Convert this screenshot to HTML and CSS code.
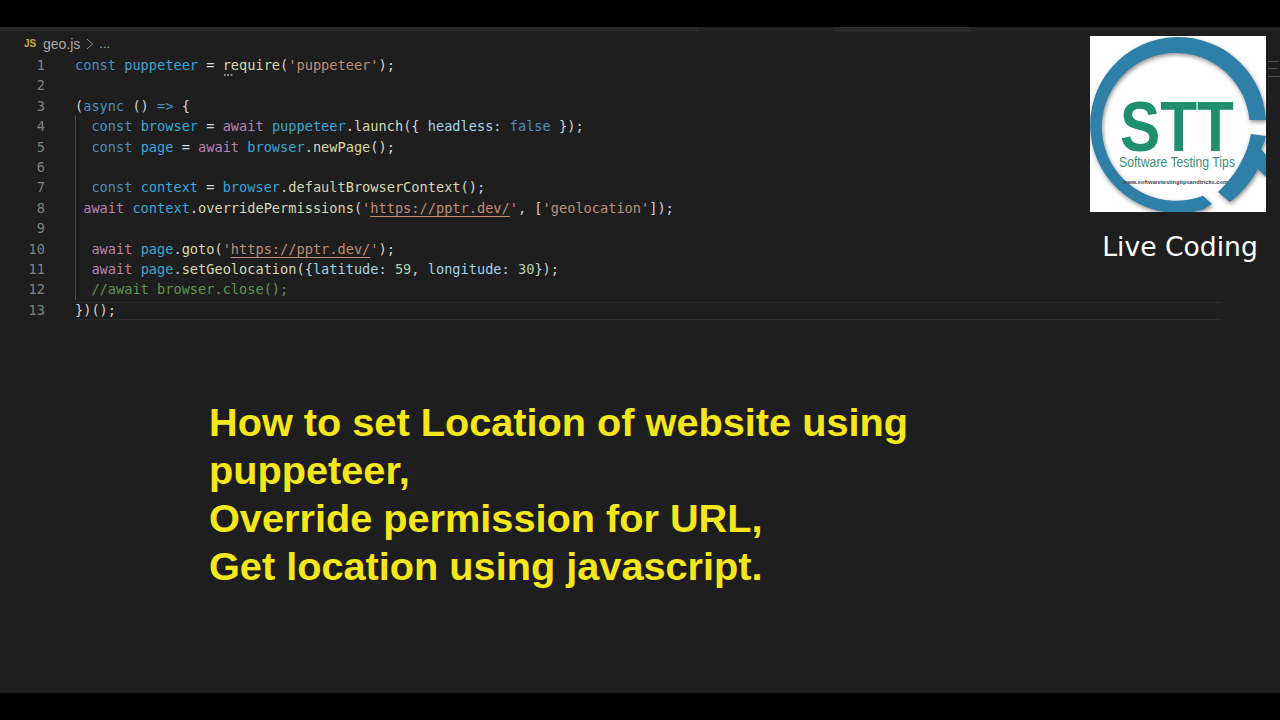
FILE: index.html
```html
<!DOCTYPE html>
<html lang="en">
<head>
<meta charset="utf-8">
<title>How to set Location of website using puppeteer</title>
<link rel="stylesheet" href="styles.css">
</head>
<body>
<div class="frame">
  <div class="workspace">
    <div class="tabstrip"></div>
    <div class="panes">
      <div class="editor-col">
        <div class="crumbs">
          <span class="js-badge">JS</span>
          <span class="file">geo.js</span>
          <svg class="chev" width="8" height="12" viewBox="0 0 8 12"><path d="M1 1 L6.5 6 L1 11" fill="none" stroke="#8c8c8c" stroke-width="1"/></svg>
          <span class="dots">...</span>
        </div>
        <div class="code">
          <div class="ln"><span class="no">1</span><span class="src"><span class="k">const</span> <span class="v">puppeteer</span> <span class="p">=</span> <span class="f hint">require</span><span class="p">(</span><span class="s">'puppeteer'</span><span class="p">);</span></span></div>
          <div class="ln"><span class="no">2</span><span class="src"></span></div>
          <div class="ln"><span class="no">3</span><span class="src"><span class="p">(</span><span class="k">async</span> <span class="p">()</span> <span class="k">=&gt;</span> <span class="p">{</span></span></div>
          <div class="ln"><span class="no">4</span><span class="src guide">  <span class="k">const</span> <span class="v">browser</span> <span class="p">=</span> <span class="c">await</span> <span class="v">puppeteer</span><span class="p">.</span><span class="f">launch</span><span class="p">({</span> <span class="a">headless:</span> <span class="k">false</span> <span class="p">});</span></span></div>
          <div class="ln"><span class="no">5</span><span class="src guide">  <span class="k">const</span> <span class="v">page</span> <span class="p">=</span> <span class="c">await</span> <span class="v">browser</span><span class="p">.</span><span class="f">newPage</span><span class="p">();</span></span></div>
          <div class="ln"><span class="no">6</span><span class="src guide"></span></div>
          <div class="ln"><span class="no">7</span><span class="src guide">  <span class="k">const</span> <span class="v">context</span> <span class="p">=</span> <span class="v">browser</span><span class="p">.</span><span class="f">defaultBrowserContext</span><span class="p">();</span></span></div>
          <div class="ln"><span class="no">8</span><span class="src guide"> <span class="c">await</span> <span class="v">context</span><span class="p">.</span><span class="f">overridePermissions</span><span class="p">(</span><span class="s">'<span class="u">https://pptr.dev/</span>'</span><span class="p">, [</span><span class="s">'geolocation'</span><span class="p">]);</span></span></div>
          <div class="ln"><span class="no">9</span><span class="src guide"></span></div>
          <div class="ln"><span class="no">10</span><span class="src guide">  <span class="c">await</span> <span class="v">page</span><span class="p">.</span><span class="f">goto</span><span class="p">(</span><span class="s">'<span class="u">https://pptr.dev/</span>'</span><span class="p">);</span></span></div>
          <div class="ln"><span class="no">11</span><span class="src guide">  <span class="c">await</span> <span class="v">page</span><span class="p">.</span><span class="f">setGeolocation</span><span class="p">({</span><span class="a">latitude:</span> <span class="n">59</span><span class="p">,</span> <span class="a">longitude:</span> <span class="n">30</span><span class="p">});</span></span></div>
          <div class="ln"><span class="no">12</span><span class="src guide">  <span class="m">//await browser.close();</span></span></div>
          <div class="ln active"><span class="no">13</span><span class="src"><span class="p">})();</span></span></div>
        </div>
        <h1 class="title">How to set Location of website using<br>puppeteer,<br>Override permission for URL,<br>Get location using javascript.</h1>
      </div>
      <aside class="side">
        <svg class="logo" width="176" height="176" viewBox="0 0 176 176">
          <rect width="176" height="176" fill="#fff"/>
          <g class="logo-ring">
            <path d="M176 84 A88 88 0 1 0 113 173.4 L122 168 L113 159.7 A74 74 0 1 1 159.5 84 Z" fill="#2f80a8"/>
            <path d="M161 98 Q155 130 128 156 L140 166 Q158 152 168 133 L176 141 L176 119 L171 113 Q175 106 176 100 Z" fill="#2f80a8"/>
          </g>
          <text class="logo-big" x="30" y="115" textLength="114" lengthAdjust="spacingAndGlyphs">STT</text>
          <text class="logo-mid" x="29" y="131" textLength="116" lengthAdjust="spacingAndGlyphs">Software Testing Tips</text>
          <text class="logo-small" x="33" y="148" textLength="105" lengthAdjust="spacingAndGlyphs">www.softwaretestingtipsandtricks.com</text>
        </svg>
        <div class="live">Live Coding</div>
      </aside>
    </div>
    <div class="minimap">
      <span class="mark mark-a"></span>
      <span class="mark mark-b"></span>
      <span class="mark mark-c"></span>
    </div>
  </div>
</div>
</body>
</html>
```
FILE: styles.css
```css
* { box-sizing: border-box; }
html, body { margin: 0; height: 100%; background: #000; }
.frame { height: 720px; padding: 27px 0; }
.workspace { position: relative; display: flex; flex-direction: column; height: 666px; background: #1e1e1e; overflow: hidden; }
.tabstrip { flex: none; height: 5px; background: linear-gradient(90deg, #272727 0 699px, #222 699px 835px, #2a2a2a 835px 971px, #222 971px); }
.panes { flex: 1; display: flex; min-height: 0; }
.editor-col { flex: 1; min-width: 0; }
.crumbs { display: flex; align-items: center; height: 23px; padding: 0 0 0 24px; font: 14px "Liberation Sans", sans-serif; color: #a9a9a9; }
.js-badge { font-size: 10px; font-weight: 700; color: #c9ae3a; width: 19px; }
.chev { margin: 0 5px 0 6px; }
.dots { color: #a9a9a9; font-size: 13px; }
.code { font: 13.63px/20.42px "DejaVu Sans Mono", monospace; color: #d4d4d4; }
.ln { display: flex; height: 20.42px; }
.no { width: 45px; text-align: right; color: #808080; flex: none; }
.src { margin-left: 30px; white-space: pre; flex: 1; }
.guide { box-shadow: inset 1px 0 0 #4a4a4a; }
.active .src { flex: none; width: 1147px; height: 18.4px; margin-top: 2px; line-height: 15px; border-top: 1px solid #2c2c2c; border-bottom: 1px solid #2c2c2c; }
.k { color: #4b8fbf; }
.v { color: #3aa6d8; }
.f { color: #d6d6b0; }
.s { color: #c08e78; }
.c { color: #b982b0; }
.a { color: #9fd4ef; }
.n { color: #b5cea8; }
.m { color: #5f9350; }
.p { color: #d4d4d4; }
.u { text-decoration: underline; text-underline-offset: 3px; }
.hint { position: relative; }
.hint::after { content: ""; position: absolute; left: 0; top: 17px; width: 10px; height: 2px; background: radial-gradient(circle, #9a9a9a 0 1px, transparent 1px) 0 0 / 3.4px 2px; }
.title { margin: 78px 0 0 209px; font: 700 39.7px/48px "Liberation Sans", sans-serif; color: #f5e71b; }
.side { flex: none; width: 190px; padding: 4px 14px 0 0; display: flex; flex-direction: column; align-items: flex-end; }
.logo { display: block; flex: none; }
.logo-ring { filter: drop-shadow(1px 2px 2px rgba(0,0,0,.45)); }
.live { width: 180px; margin: 17px -4px 0 0; text-align: center; font: 26.6px/36px "DejaVu Sans", sans-serif; color: #fff; }
.logo-big { font: 700 70px "Liberation Sans", sans-serif; fill: #1f8f6d; }
.logo-mid { font: 14px "Liberation Sans", sans-serif; fill: #3f8f7a; }
.logo-small { font: 700 6px "Liberation Sans", sans-serif; fill: #3a4a55; }
.minimap { position: absolute; left: 1268px; top: 33px; width: 12px; height: 18px; }
.mark { position: absolute; left: 0; height: 1px; background: #46525c; }
.mark-a { top: 1px; width: 11px; }
.mark-b { top: 8px; width: 9px; }
.mark-c { top: 16px; width: 12px; }
```
